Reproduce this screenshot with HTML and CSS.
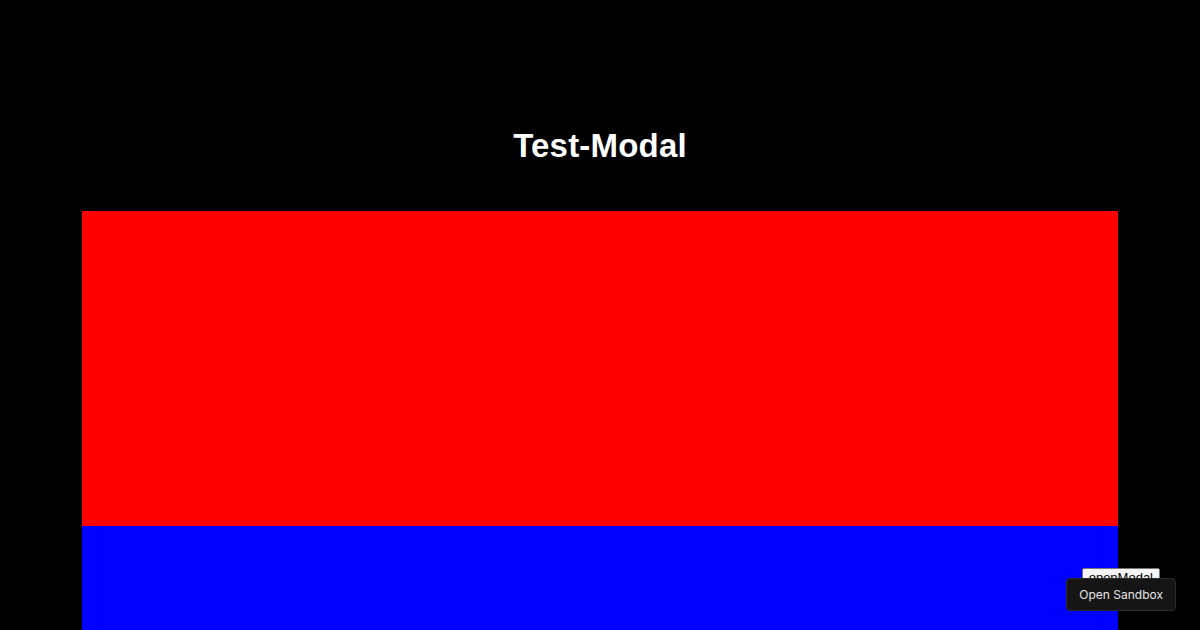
FILE: index.html
```html
<!DOCTYPE html>
<html lang="en">
<head>
  <meta charset="UTF-8" />
  <meta name="viewport" content="width=device-width, initial-scale=1.0"/>
  <title>Test-Modal</title>
  <link rel="stylesheet" href="styles.css">
</head>
<body>

<div class="app">
  <h1>Test-Modal</h1>

  <div class="panels">
    <div class="panel red"></div>
    <div class="panel blue"></div>
  </div>

  <button class="open-btn" type="button">openModal</button>
</div>

<a class="sandbox-link" href="#">Open Sandbox</a>

</body>
</html>
```

FILE: styles.css
```css
html, body {
  margin: 0;
  height: 100%;
  overflow: hidden;
  background-color: #000;
}

body {
  font-family: "Liberation Sans", Arial, sans-serif;
  color: #fff;
}

.app {
  position: relative;
  height: 100%;
  padding: 0 82px;
}

h1 {
  margin: 0 0 46px 0;
  padding-top: 127px;
  text-align: center;
  font-size: 33px;
  line-height: 38px;
  font-weight: bold;
  letter-spacing: 0.2px;
}

.panels {
  display: flex;
  flex-direction: column;
}

.panel {
  height: 315px;
}

.red {
  background-color: #ff0000;
}

.blue {
  background-color: #0000ff;
}

.open-btn {
  position: absolute;
  right: 40px;
  top: 568px;
  padding: 1px 6px;
  font-family: "Liberation Sans", Arial, sans-serif;
  font-size: 13px;
  color: #000;
  background-color: #f4f4f4;
  border: 1px solid #767676;
  border-radius: 2px;
}

.sandbox-link {
  position: fixed;
  right: 24px;
  bottom: 19px;
  padding: 0 12px;
  height: 33px;
  line-height: 31px;
  box-sizing: border-box;
  font-family: Inter, "Noto Sans", sans-serif;
  font-size: 12px;
  color: #e6e6e6;
  text-decoration: none;
  background-color: #151515;
  border: 1px solid #2c2c2c;
  border-radius: 4px;
}
```
